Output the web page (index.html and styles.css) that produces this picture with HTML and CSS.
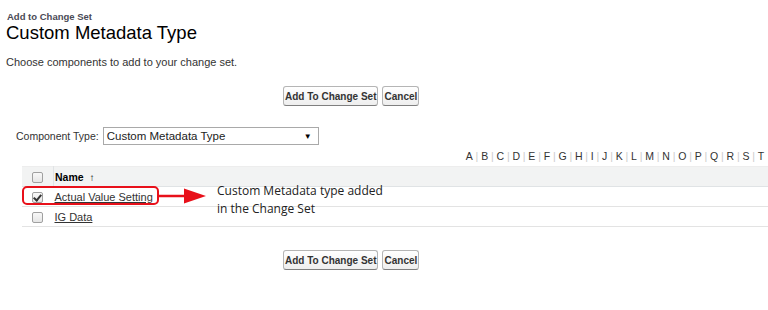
FILE: index.html
```html
<!DOCTYPE html>
<html>
<head lang="en">
    <meta charset="utf-8">
    <title>Add to Change Set</title>
    <link rel="stylesheet" href="styles.css">
</head>
<body>
<div class="page">
    <div class="ptBreadcrumb">Add to Change Set</div>
    <h1 class="pageType">Custom Metadata Type</h1>
    <p class="intro">Choose components to add to your change set.</p>

    <div class="pbButton top">
        <button type="button" class="btn">Add To Change Set</button>
        <button type="button" class="btn">Cancel</button>
    </div>

    <div class="filter">
        <label for="ctype">Component Type:</label>
        <div class="selectBox" id="ctype">
            <span>Custom Metadata Type</span>
            <i class="caret">&#9660;</i>
        </div>
    </div>

    <div class="alpha">
        <a>A</a>|<a>B</a>|<a>C</a>|<a>D</a>|<a>E</a>|<a>F</a>|<a>G</a>|<a>H</a>|<a>I</a>|<a>J</a>|<a>K</a>|<a>L</a>|<a>M</a>|<a>N</a>|<a>O</a>|<a>P</a>|<a>Q</a>|<a>R</a>|<a>S</a>|<a>T</a>
    </div>

    <div class="listWrap">
        <table class="list">
            <tr class="headerRow">
                <th class="chk"><i class="cb"></i></th>
                <th>Name <span class="sort">&#8593;</span></th>
            </tr>
            <tr class="dataRow">
                <td class="chk"><i class="cb checked"></i></td>
                <td><a href="#">Actual Value Setting</a></td>
            </tr>
            <tr class="dataRow">
                <td class="chk"><i class="cb"></i></td>
                <td><a href="#">IG Data</a></td>
            </tr>
        </table>

        <div class="highlight"></div>
        <svg class="arrow" width="50" height="18" viewBox="0 0 50 18">
            <line x1="0" y1="9" x2="28" y2="9" stroke="#e8101a" stroke-width="2.5"/>
            <polygon points="25,1.5 47,9 25,16.5" fill="#e8101a"/>
        </svg>
        <div class="note">Custom Metadata type added<br>in the Change Set</div>
    </div>

    <div class="pbButton bottom">
        <button type="button" class="btn">Add To Change Set</button>
        <button type="button" class="btn">Cancel</button>
    </div>
</div>
</body>
</html>
```

FILE: styles.css
```css
html, body {
    margin: 0;
    padding: 0;
    background: #fff;
    overflow: hidden;
}

.page {
    width: 768px;
    font-family: "Liberation Sans", Arial, sans-serif;
    color: #333;
    padding-top: 11px;
}

.ptBreadcrumb {
    margin-left: 7px;
    font-size: 9.5px;
    font-weight: bold;
    color: #4a4a56;
    line-height: 11px;
}

.pageType {
    margin: 0 0 0 6px;
    font-size: 18.5px;
    font-weight: normal;
    color: #000;
    line-height: 22px;
}

.intro {
    margin: 11px 0 0 6px;
    font-size: 11px;
    line-height: 14px;
    color: #333;
}

.pbButton {
    display: flex;
    gap: 4px;
    margin-left: 283px;
}

.pbButton.top {
    margin-top: 17px;
}

.pbButton.bottom {
    margin-top: 23px;
}

.btn {
    font-family: "Liberation Sans", Arial, sans-serif;
    font-size: 10px;
    font-weight: bold;
    color: #333;
    height: 20px;
    padding: 0 1px;
    background: linear-gradient(#ffffff, #eeeeee);
    border: 1px solid #b5b5b5;
    border-bottom-color: #7f7f7f;
    border-radius: 3px;
}

.filter {
    display: flex;
    align-items: center;
    margin: 21px 0 0 16px;
    font-size: 10.5px;
}

.filter label {
    margin-right: 4px;
}

.selectBox {
    border: 1px solid #a9a9a9;
    display: flex;
    align-items: center;
    justify-content: space-between;
    padding: 0 6px 0 3px;
    box-sizing: border-box;
    width: 216px;
    height: 18px;
    font-size: 11.5px;
    color: #222;
}

.caret {
    font-style: normal;
    font-size: 8px;
    color: #000;
}

.alpha {
    margin: 4px 0 0 463px;
    font-size: 10.5px;
    line-height: 14px;
    color: #ccc;
    white-space: nowrap;
}

.alpha a {
    color: #333;
    padding: 0 2.8px;
}

.listWrap {
    position: relative;
    margin: 3px 0 0 22px;
    width: 746px;
}

.list {
    width: 746px;
    border-collapse: collapse;
    font-size: 11px;
    border-bottom: 1px solid #e0e3e5;
}

.list th,
.list td {
    text-align: left;
    height: 19px;
    padding: 0;
    vertical-align: middle;
}

.headerRow th {
    background: #f2f3f3;
    border-top: 1px solid #ededed;
    border-bottom: 1px solid #e0e3e5;
    font-weight: bold;
    color: #000;
    font-size: 10.5px;
}

.headerRow th.chk {
    border-right: 1px solid #e0e3e5;
}

.dataRow td {
    border-bottom: 1px solid #e3e3e3;
}

.list .chk {
    width: 31px;
    text-align: center;
}

.list td a {
    color: #333;
    text-decoration: underline;
    padding-left: 1px;
}

.list th + th {
    padding-left: 1px;
}

.sort {
    font-weight: normal;
    font-size: 10px;
    margin-left: 3px;
}

.cb {
    display: inline-block;
    width: 9px;
    height: 9px;
    border: 1px solid #a0a0a0;
    border-radius: 2px;
    background: linear-gradient(#f8f8f8, #e6e6e6);
    vertical-align: middle;
    position: relative;
}

.cb.checked::after {
    content: "";
    position: absolute;
    left: 2px;
    top: 0;
    width: 3px;
    height: 6px;
    border: solid #333;
    border-width: 0 2px 2px 0;
    transform: rotate(40deg);
}

.highlight {
    position: absolute;
    left: 0;
    top: 20px;
    width: 137px;
    height: 19px;
    border: 2px solid #e8101a;
    border-radius: 5px;
    box-sizing: border-box;
}

.arrow {
    position: absolute;
    left: 137px;
    top: 21px;
}

.note {
    position: absolute;
    left: 195px;
    top: 16px;
    font-family: "Open Sans", "DejaVu Sans", sans-serif;
    font-size: 12px;
    line-height: 18px;
    color: #222;
}
```
